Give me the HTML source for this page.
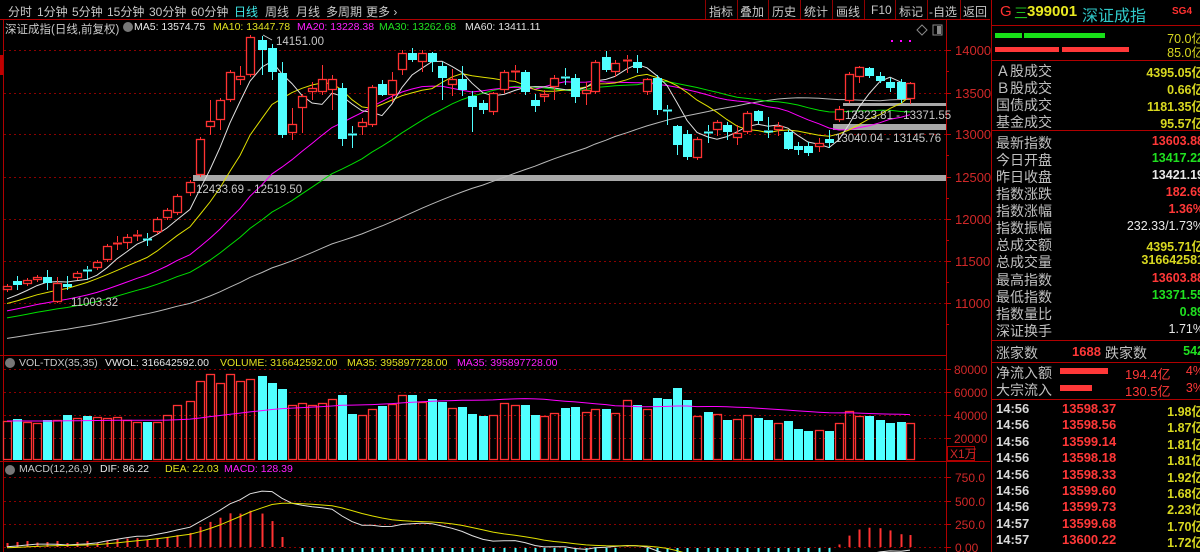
<!DOCTYPE html>
<html><head><meta charset="utf-8">
<style>
*{margin:0;padding:0;box-sizing:border-box}
body{width:1200px;height:552px;background:#000;overflow:hidden;position:relative;font-family:"Liberation Sans","Noto Sans CJK SC",sans-serif;color:#c8c8c8}
.a{position:absolute;white-space:nowrap}
.tb{font-size:12px;top:3px;color:#c8c8c8}
.hd{font-size:10.5px;color:#c8c8c8}
.rp{position:absolute;left:992px;top:0;width:208px;height:552px;overflow:hidden}
.lb{position:absolute;left:4px;font-size:14px;color:#c0c0c0;white-space:nowrap}
.vl{position:absolute;right:-4px;font-size:12.5px;font-weight:bold;white-space:nowrap;text-align:right}
.y{color:#d8d820}.r{color:#ff3838}.g{color:#20e020}.w{color:#e8e8e8}.c{color:#40e8e8}
.hl{position:absolute;left:0;width:208px;height:1px;background:#b00000}
</style></head><body>
<svg id="s" width="1200" height="552" style="position:absolute;left:0;top:0"></svg>

<div class="a tb" style="left:8px">分时</div>
<div class="a tb" style="left:37px">1分钟</div>
<div class="a tb" style="left:72px">5分钟</div>
<div class="a tb" style="left:107px">15分钟</div>
<div class="a tb" style="left:149px">30分钟</div>
<div class="a tb" style="left:191px">60分钟</div>
<div class="a tb" style="left:234px;color:#40e8e8">日线</div>
<div class="a tb" style="left:265px">周线</div>
<div class="a tb" style="left:296px">月线</div>
<div class="a tb" style="left:326px">多周期</div>
<div class="a tb" style="left:366px">更多 ›</div>
<div class="a tb" style="left:709px">指标</div>
<div class="a tb" style="left:740px">叠加</div>
<div class="a tb" style="left:772px">历史</div>
<div class="a tb" style="left:804px">统计</div>
<div class="a tb" style="left:836px">画线</div>
<div class="a tb" style="left:871px">F10</div>
<div class="a tb" style="left:899px">标记</div>
<div class="a tb" style="left:929px">-自选</div>
<div class="a tb" style="left:963px">返回</div>

<div class="a hd" style="left:5px;top:21px;font-size:11.5px">深证成指(日线,前复权)</div>
<div class="a hd" style="left:134px;top:21px;color:#e8e8e8">MA5: 13574.75</div>
<div class="a hd" style="left:213px;top:21px;color:#e0e020">MA10: 13447.78</div>
<div class="a hd" style="left:297px;top:21px;color:#ff20ff">MA20: 13228.38</div>
<div class="a hd" style="left:379px;top:21px;color:#20e020">MA30: 13262.68</div>
<div class="a hd" style="left:465px;top:21px;color:#e0e0e0">MA60: 13411.11</div>

<div class="a hd" style="left:276px;top:36px;font-size:11.5px">14151.00</div>
<div class="a hd" style="left:71px;top:297px;font-size:11.5px">11003.32</div>
<div class="a hd" style="left:196px;top:184px;font-size:11.5px">12433.69 - 12519.50</div>
<div class="a hd" style="left:845px;top:110px;font-size:11.5px">13323.81 - 13371.55</div>
<div class="a hd" style="left:835px;top:133px;font-size:11.5px">13040.04 - 13145.76</div>

<div class="a hd" style="left:19px;top:357px">VOL-TDX(35,35)</div>
<div class="a hd" style="left:105px;top:357px;color:#e8e8e8">VWOL: 316642592.00</div>
<div class="a hd" style="left:220px;top:357px;color:#e0e020">VOLUME: 316642592.00</div>
<div class="a hd" style="left:347px;top:357px;color:#e0e020">MA35: 395897728.00</div>
<div class="a hd" style="left:457px;top:357px;color:#ff20ff">MA35: 395897728.00</div>
<div class="a hd" style="left:19px;top:463px">MACD(12,26,9)</div>
<div class="a hd" style="left:100px;top:463px;color:#e8e8e8">DIF: 86.22</div>
<div class="a hd" style="left:165px;top:463px;color:#e0e020">DEA: 22.03</div>
<div class="a hd" style="left:224px;top:463px;color:#ff20ff">MACD: 128.39</div>

<div class="rp">
 <div class="a" style="left:8px;top:3px;font-size:15px;color:#ff3030">G</div>
 <div class="a" style="left:22px;top:3px;font-size:14px;color:#20c020">三</div>
 <div class="a" style="left:35px;top:3px;font-size:15px;font-weight:bold;color:#e8e820">399001</div>
 <div class="a" style="left:90px;top:2px;font-size:16px;color:#30c8c8">深证成指</div>
 <div class="a" style="left:180px;top:6px;font-size:10px;font-weight:bold;color:#ff3030">SG4</div>
 <div class="hl" style="top:25px"></div>
 <div class="a" style="left:3px;top:33px;width:27px;height:5px;background:#18e018"></div>
 <div class="a" style="left:32px;top:33px;width:81px;height:5px;background:#18e018"></div>
 <div class="a" style="left:3px;top:47px;width:64px;height:5px;background:#ff3838"></div>
 <div class="a" style="left:70px;top:47px;width:67px;height:5px;background:#ff3838"></div>
 <div class="vl y" style="top:28px;font-weight:normal">70.0亿</div>
 <div class="vl y" style="top:42px;font-weight:normal">85.0亿</div>
 <div class="hl" style="top:60px"></div>
 <div class="lb" style="top:61px">Ａ股成交</div><div class="vl y" style="top:62px">4395.05亿</div>
 <div class="lb" style="top:78px">Ｂ股成交</div><div class="vl y" style="top:79px">0.66亿</div>
 <div class="lb" style="top:95px">国债成交</div><div class="vl y" style="top:96px">1181.35亿</div>
 <div class="lb" style="top:112px">基金成交</div><div class="vl y" style="top:113px">95.57亿</div>
 <div class="hl" style="top:130px"></div>
 <div class="lb" style="top:133px">最新指数</div><div class="vl r" style="top:134px">13603.88</div>
 <div class="lb" style="top:150px">今日开盘</div><div class="vl g" style="top:151px">13417.22</div>
 <div class="lb" style="top:167px">昨日收盘</div><div class="vl w" style="top:168px">13421.19</div>
 <div class="lb" style="top:184px">指数涨跌</div><div class="vl r" style="top:185px">182.69</div>
 <div class="lb" style="top:201px">指数涨幅</div><div class="vl r" style="top:202px">1.36%</div>
 <div class="lb" style="top:218px">指数振幅</div><div class="vl w" style="top:219px;font-weight:normal">232.33/1.73%</div>
 <div class="lb" style="top:235px">总成交额</div><div class="vl y" style="top:236px">4395.71亿</div>
 <div class="lb" style="top:252px">总成交量</div><div class="vl y" style="top:253px">316642581</div>
 <div class="lb" style="top:270px">最高指数</div><div class="vl r" style="top:271px">13603.88</div>
 <div class="lb" style="top:287px">最低指数</div><div class="vl g" style="top:288px">13371.55</div>
 <div class="lb" style="top:304px">指数量比</div><div class="vl g" style="top:305px">0.89</div>
 <div class="lb" style="top:321px">深证换手</div><div class="vl w" style="top:322px;font-weight:normal">1.71%</div>
 <div class="hl" style="top:340px"></div>
 <div class="lb" style="top:343px">涨家数</div>
 <div class="a r" style="left:80px;top:344px;font-size:13px;font-weight:bold">1688</div>
 <div class="lb" style="left:113px;top:343px">跌家数</div>
 <div class="vl g" style="top:344px">542</div>
 <div class="hl" style="top:362px"></div>
 <div class="lb" style="top:363px">净流入额</div>
 <div class="a" style="left:68px;top:368px;width:48px;height:6px;background:#ff3838"></div>
 <div class="a r" style="left:133px;top:364px;font-size:13px">194.4亿</div>
 <div class="vl r" style="top:364px;font-weight:normal">4%</div>
 <div class="lb" style="top:380px">大宗流入</div>
 <div class="a" style="left:68px;top:385px;width:32px;height:6px;background:#ff3838"></div>
 <div class="a r" style="left:133px;top:381px;font-size:13px">130.5亿</div>
 <div class="vl r" style="top:381px;font-weight:normal">3%</div>
 <div class="hl" style="top:399px"></div>
 <div id="ticks"></div>
</div>

<script>
var S=document.getElementById('s'),h='';
function L(x1,y1,x2,y2,c,w,d){h+='<line x1="'+x1+'" y1="'+y1+'" x2="'+x2+'" y2="'+y2+'" stroke="'+c+'" stroke-width="'+(w||1)+'"'+(d?' stroke-dasharray="'+d+'"':'')+'/>';}
function R(x,y,w,hh,f,s){h+='<rect x="'+x+'" y="'+y+'" width="'+w+'" height="'+hh+'" fill="'+f+'"'+(s?' stroke="'+s+'"':'')+'/>';}
function T(x,y,t,c,fs){h+='<text x="'+x+'" y="'+y+'" fill="'+c+'" font-size="'+(fs||13)+'" font-family="Liberation Sans,sans-serif">'+t+'</text>';}
var RED='#ff3232',CY='#50ffff',DR='#8a0000';
L(0,19.5,990,19.5,'#b00000');L(3.5,19,3.5,552,'#b00000');
R(0,55,3,20,'#c00000');
L(0,355.5,946,355.5,'#b00000');L(0,461.5,990,461.5,'#b00000');
L(946.5,19,946.5,552,'#b00000');L(991.5,0,991.5,552,'#b00000');
[705,737,768,800,832,864,895,927,960].forEach(function(x){L(x+.5,0,x+.5,19,'#900000');});
var pg=[[50,'14000'],[93,'13500'],[134,'13000'],[177,'12500'],[219,'12000'],[261,'11500'],[303,'11000']];
pg.forEach(function(p){L(4,p[0]+.5,946,p[0]+.5,DR,1,'2,3');L(946,p[0]+.5,951,p[0]+.5,'#c00000');T(955,p[0]+5,p[1],'#d02828',13);});
[71,113,155,198,240,282,324].forEach(function(y){L(946,y+.5,949,y+.5,'#c00000');});
[[369,'80000'],[392,'60000'],[415,'40000'],[438,'20000']].forEach(function(p){L(4,p[0]+.5,946,p[0]+.5,DR,1,'2,3');L(946,p[0]+.5,951,p[0]+.5,'#c00000');T(954,p[0]+5,p[1],'#d02828',12);});
[[477,'750.0'],[501,'500.0'],[524,'250.0'],[547,'0.00']].forEach(function(p){L(4,p[0]+.5,946,p[0]+.5,DR,1,'2,3');L(946,p[0]+.5,951,p[0]+.5,'#c00000');T(955,p[0]+5,p[1],'#d02828',12);});
h+='<rect x="947.5" y="446.5" width="27" height="14" fill="none" stroke="#b00000"/>';T(950,458,'X1万','#d02828',12);
R(193,175,753,6,'#a8a8a8');R(843,103,103,3,'#a8a8a8');R(833,124,113,6,'#a8a8a8');
h+='<path d="M922 25 l5 5 -5 5 -5 -5z" fill="none" stroke="#888"/>';R(933,25,9,10,'#000','#888');R(937,26,4,8,'#888');
[891,900,909].forEach(function(x){R(x,40,2,2,'#ff00ff');});
h+='<circle cx="128" cy="27" r="5" fill="#777"/><circle cx="10" cy="363" r="5" fill="#777"/><circle cx="10" cy="470" r="5" fill="#777"/>';
var C=[[7,286,290,'r'],[17,281,285,'c',276,290],[27,280,284,'r'],[37,277,280,'r'],[47,277,283,'c',270,290],[57,283,302,'r',277,303],[67,284,287,'c',276,290],[77,273,278,'r'],[87,269,271,'c',266,280],[97,262,268,'r'],[107,246,260,'r'],[117,242,244,'r',236,250],[127,237,243,'r',234,249],[137,234,236,'r',230,241],[147,238,240,'c',233,246],[157,219,232,'r'],[167,210,218,'r'],[177,196,213,'r'],[190,182,193,'r',180,196],[200,139,175,'r'],[210,121,127,'r',100,135],[220,100,120,'r',98,130],[230,72,100,'r',70,102],[240,76,80,'r',66,85],[250,37,75,'r'],[262,40,50,'c',36,75],[272,48,72,'c',44,80],[282,73,135,'c',62,138],[292,124,133,'r',108,140],[302,96,108,'r',94,133],[312,88,92,'r',82,100],[322,79,92,'r',65,95],[332,79,90,'r',75,110],[342,88,139,'c',83,146],[352,133,135,'c',126,148],[362,122,127,'r',118,135],[372,87,125,'r'],[382,84,95,'c',80,96],[392,80,95,'r',72,102],[402,53,70,'r',50,75],[412,53,60,'c',48,62],[422,53,62,'r',50,72],[432,53,62,'c',52,72],[442,66,78,'c',62,100],[452,79,85,'r',69,96],[462,79,90,'c',66,96],[472,96,107,'c',91,132],[483,103,110,'c',100,114],[493,93,112,'r',92,115],[504,72,90,'r',70,93],[515,70,72,'r',65,80],[525,72,92,'c',70,95],[535,100,106,'c',94,112],[544,94,97,'r',90,102],[554,78,87,'r',75,100],[565,76,78,'c',68,85],[575,78,97,'c',74,103],[586,90,94,'r',82,105],[595,62,92,'r'],[606,57,70,'c',51,72],[615,63,72,'r',60,77],[627,59,61,'r',55,73],[637,62,68,'c',55,73],[647,79,92,'r',78,95],[657,78,110,'c',75,115],[667,109,111,'c',105,125],[677,126,145,'c',125,155],[687,134,157,'c',130,160],[697,139,158,'r'],[708,131,133,'c',125,143],[717,122,130,'r',120,136],[727,125,132,'c',122,140],[737,133,138,'r',125,145],[747,113,132,'r'],[758,111,121,'c',110,124],[768,130,132,'c',117,138],[778,126,130,'r',122,136],[788,132,149,'c',130,150],[798,146,150,'c',142,155],[808,146,153,'c',142,156],[819,143,147,'r',138,152],[829,139,143,'c',130,148],[839,109,120,'r',106,122],[849,74,101,'r'],[859,67,77,'r',66,83],[869,68,76,'c',67,78],[880,76,81,'c',72,83],[890,82,88,'c',78,92],[901,82,99,'c',79,103],[910,83,99,'r',82,104]];
var V=[421,419,422,423,420,420,415,418,416,417,418,417,420,422,422,422,415,405,401,381,374,383,374,381,379,376,383,389,405,403,405,403,399,395,414,415,409,406,404,395,395,402,399,402,408,407,414,416,415,403,405,405,415,416,413,408,407,412,409,409,413,400,405,409,398,399,388,400,416,412,414,420,419,415,418,420,423,421,429,431,430,431,423,411,416,416,420,423,422,423];
var cl=C.map(function(c){return c[3]=='r'?c[1]:c[2];});
var pre=[];for(var i=0;i<60;i++)pre.push(380-80*i/59);
var all=pre.concat(cl);
function ma(n){var p=[];for(var i=0;i<C.length;i++){var s=0;for(var k=0;k<n;k++)s+=all[60+i-k];p.push(C[i][0]+','+(s/n).toFixed(1));}return p.join(' ');}
function PL(pts,c,w){h+='<polyline points="'+pts+'" fill="none" stroke="'+c+'" stroke-width="'+(w||1)+'"/>';}
C.forEach(function(c,i){var t=V[i]||420,col=c[3]=='r';
 if(col)h+='<rect x="'+(c[0]-3.5)+'" y="'+(t+.5)+'" width="8" height="'+(460-t-1)+'" fill="none" stroke="'+RED+'" stroke-width="1.3"/>';
 else R(c[0]-4,t,9,460-t,CY);});
var vp=[];for(var i=0;i<C.length;i++){var s=0;for(var k=0;k<35;k++){var j=i-k;s+=(j>=0?V[j]:421);}vp.push(C[i][0]+','+(s/35).toFixed(1));}
PL(vp.join(' '),'#ff00ff');
PL(ma(60),'#b8b8b8');PL(ma(30),'#00e000');PL(ma(20),'#ff00ff');PL(ma(10),'#e0e000');PL(ma(5),'#e0e0e0');
C.forEach(function(c){var x=c[0],t=c[1],b=c[2],wt=c[4]||t-2,wb=c[5]||b+2,col=c[3]=='r'?RED:CY;
 L(x+.5,wt,x+.5,t,col);L(x+.5,b,x+.5,wb,col);
 if(b-t<3){L(x-4,t+1.5,x+5,t+1.5,col,2);}
 else if(c[3]=='r')h+='<rect x="'+(x-3.5)+'" y="'+(t+.5)+'" width="8" height="'+(b-t-1)+'" fill="#000" stroke="'+RED+'" stroke-width="1.3"/>';
 else R(x-4,t,9,b-t,CY);});
L(263,35,272,40,'#c8c8c8');
var k12=2/13,k26=2/27,k9=0.2,e12=all[0],e26=all[0],dea=0,dp=[],ep=[],bars=[];
for(var i=0;i<all.length;i++){e12=e12+(all[i]-e12)*k12;e26=e26+(all[i]-e26)*k26;var dif=(e26-e12)*11.82;dea=dea+(dif-dea)*k9;
 if(i>=60){var ci=i-60,x=C[ci][0];dp.push(x+','+Math.max(465,547-(dif-120)*0.0933).toFixed(1));ep.push(x+','+Math.max(465,547-(dea-120)*0.0933).toFixed(1));bars.push([x,2*(dif-dea)]);}}
bars.forEach(function(b,i){var hh=b[1]*0.0933;if(i<28&&hh<6)hh=Math.max(hh,4+(i%3));if(hh>0)L(b[0]+.5,547,b[0]+.5,Math.max(470,547-hh),RED,2);else L(b[0]+.5,548,b[0]+.5,552,CY,2);});
PL(dp.join(' '),'#e0e0e0');PL(ep.join(' '),'#e0e000');
S.innerHTML=h;
var tk=[['14:56','13598.37','1.98'],['14:56','13598.56','1.87'],['14:56','13599.14','1.81'],['14:56','13598.18','1.81'],['14:56','13598.33','1.92'],['14:56','13599.60','1.68'],['14:56','13599.73','2.23'],['14:57','13599.68','1.70'],['14:57','13600.22','1.72'],['14:57','13600.88','5253']];
var th='';tk.forEach(function(t,i){var y=401+i*16.4;
 th+='<div class="a w" style="left:4px;top:'+y+'px;font-size:13px;font-weight:bold;color:#d8d8d8">'+t[0]+'</div>';
 th+='<div class="a r" style="left:70px;top:'+y+'px;font-size:13px;font-weight:bold">'+t[1]+'</div>';
 th+='<div class="vl y" style="top:'+y+'px">'+t[2]+(i==9?'万':'亿')+'</div>';});
document.getElementById('ticks').innerHTML=th;
</script>
</body></html>
